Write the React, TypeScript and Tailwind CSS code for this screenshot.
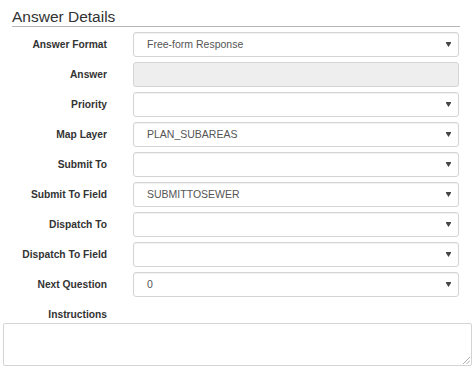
import React from "react";

type Row = { label: string; value?: string; disabled?: boolean };

const rows: Row[] = [
  { label: "Answer Format", value: "Free-form Response" },
  { label: "Answer", disabled: true },
  { label: "Priority", value: "" },
  { label: "Map Layer", value: "PLAN_SUBAREAS" },
  { label: "Submit To", value: "" },
  { label: "Submit To Field", value: "SUBMITTOSEWER" },
  { label: "Dispatch To", value: "" },
  { label: "Dispatch To Field", value: "" },
  { label: "Next Question", value: "0" },
];

function Arrow() {
  return (
    <svg width="5" height="5" viewBox="0 0 5 5" className="shrink-0">
      <rect x="0" y="0" width="5" height="1" fill="#444" />
      <polygon points="0,1 5,1 2.5,5" fill="#444" />
    </svg>
  );
}

export default function App() {
  return (
    <div
      className="w-[474px] h-[369px] bg-white overflow-hidden"
      style={{ fontFamily: '"Liberation Sans", Arial, sans-serif' }}
    >
      <div className="ml-[12px] mt-[8px] w-[448px] h-[19px] leading-[18px] text-[15.5px] text-[#333] border-b border-[#b5b5b5]">
        Answer Details
      </div>
      <div className="mt-[5px] flex flex-col gap-[5px]">
        {rows.map((r) => (
          <div key={r.label} className="flex items-center h-[25px]">
            <div className="w-[107px] text-right text-[10.25px] font-bold text-[#333]">
              {r.label}
            </div>
            {r.disabled ? (
              <div className="ml-[26px] w-[326px] h-[25px] rounded-[3px] border border-[#d4d4d4] bg-[#eeeeee]" />
            ) : (
              <div className="ml-[26px] w-[326px] h-[25px] rounded-[3px] border border-[#d4d4d4] bg-white shadow-[inset_0_1px_1px_rgba(0,0,0,0.06)] flex items-center pl-[13px] pr-[7px]">
                <span className="flex-1 text-[10.5px] text-[#555]">{r.value}</span>
                <Arrow />
              </div>
            )}
          </div>
        ))}
      </div>
      <div className="mt-[11px] h-[14px] leading-[14px] w-[107px] text-right text-[10.25px] font-bold text-[#333]">
        Instructions
      </div>
      <div className="relative mt-[1px] ml-[3px] w-[469px] h-[43px]">
        <textarea
          readOnly
          className="block resize-none w-full h-full rounded-[2px] border border-[#d4d4d4] bg-white outline-none"
        />
        <svg
          width="7"
          height="7"
          viewBox="0 0 7 7"
          className="absolute right-[2px] bottom-[2px] pointer-events-none"
        >
          <line x1="7" y1="0" x2="0" y2="7" stroke="#9a9a9a" strokeWidth="0.8" />
          <line x1="7" y1="3.5" x2="3.5" y2="7" stroke="#9a9a9a" strokeWidth="0.8" />
        </svg>
      </div>
    </div>
  );
}
